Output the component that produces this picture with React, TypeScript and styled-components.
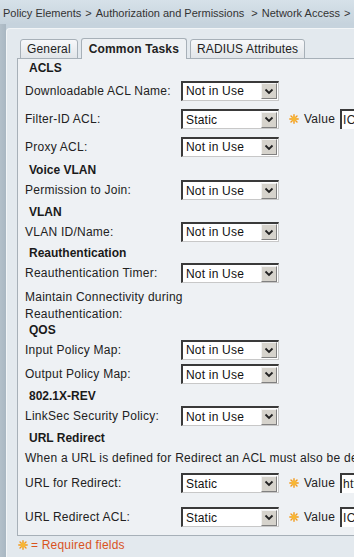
import React from "react";
import styled, { createGlobalStyle } from "styled-components";

const Global = createGlobalStyle`
  html, body { margin: 0; padding: 0; overflow: hidden; }
  body { font-family: "Liberation Sans", Arial, sans-serif; background: #e2e8ed; }
`;

const Page = styled.div`
  width: 354px;
  height: 557px;
  display: flex;
  flex-direction: column;
  overflow: hidden;
  color: #222;
`;

const Breadcrumb = styled.div`
  height: 24px;
  flex: none;
  display: flex;
  align-items: center;
  padding: 2px 0 0 3px;
  box-sizing: border-box;
  font-size: 11px;
  white-space: nowrap;
  color: #333;
  background: linear-gradient(#d6e1e9, #c6d3dd);
`;

const Crumb = styled.span<{ $link?: boolean }>`
  color: ${(p) => (p.$link ? "#2a7bd0" : "#333")};
`;

const Sep = styled.span`
  margin: 0 4px;
`;

const Body = styled.div`
  flex: 1;
  display: flex;
  background: #c6d3dd;
  min-height: 0;
`;

const LeftStrip = styled.div`
  width: 6px;
  flex: none;
  background: linear-gradient(90deg, #b3c0ca, #a9b7c2);
`;

const Outer = styled.div`
  flex: 1;
  margin-top: 4px;
  border-top: 1px solid #f2f5f7;
  border-left: 1px solid #f2f5f7;
  border-top-left-radius: 4px;
  background: #e3e9ee;
  padding: 9px 0 0 10px;
  display: flex;
  flex-direction: column;
  min-width: 0;
  overflow: hidden;
`;

const TabBar = styled.div`
  display: flex;
  align-items: flex-end;
  gap: 3px;
  padding-left: 3px;
  height: 21px;
  position: relative;
  z-index: 1;
`;

const Tab = styled.div<{ $active?: boolean }>`
  height: ${(p) => (p.$active ? 21 : 20)}px;
  box-sizing: border-box;
  padding: 0 ${(p) => (p.$active ? 7 : 6)}px;
  display: flex;
  align-items: center;
  font-size: 12px;
  letter-spacing: 0.15px;
  font-weight: ${(p) => (p.$active ? "bold" : "normal")};
  color: #222;
  border: 1px solid #a7b0b8;
  border-bottom: ${(p) => (p.$active ? "none" : "1px solid #a7b0b8")};
  border-radius: 3px 3px 0 0;
  background: ${(p) =>
    p.$active ? "#eef1f4" : "linear-gradient(#f7f8fa, #e1e5e9)"};
  white-space: nowrap;
`;

const Panel = styled.div`
  margin-top: -1px;
  border-top: 1px solid #a7b0b8;
  border-left: 1px solid #a7b0b8;
  border-bottom: 1px solid #a7b0b8;
  background: #eef1f4;
  padding: 0 0 2px 7px;
  width: 400px;
  box-sizing: border-box;
`;

const Header = styled.div<{ $h?: number }>`
  height: ${(p) => p.$h ?? 18}px;
  display: flex;
  align-items: center;
  padding-left: 4px;
  font-size: 12px;
  font-weight: bold;
  color: #1a1a1a;
`;

const Row = styled.div<{ $h: number }>`
  height: ${(p) => p.$h}px;
  box-sizing: border-box;
  padding-bottom: 2px;
  display: flex;
  align-items: center;
  font-size: 12px;
  white-space: nowrap;
`;

const Label = styled.div`
  width: 156px;
  flex: none;
  color: #222;
  letter-spacing: 0.25px;
`;

const Note = styled.div<{ $h: number }>`
  height: ${(p) => p.$h}px;
  box-sizing: border-box;
  padding-top: 4px;
  display: flex;
  align-items: center;
  font-size: 12px;
  letter-spacing: 0.25px;
  white-space: nowrap;
`;

const TwoLine = styled.div<{ $h: number }>`
  height: ${(p) => p.$h}px;
  box-sizing: border-box;
  padding-top: 3px;
  font-size: 12px;
  letter-spacing: 0.25px;
  line-height: 17px;
`;

const SelectBox = styled.div`
  width: 98px;
  height: 20px;
  box-sizing: border-box;
  display: flex;
  align-items: center;
  background: #fff;
  border-top: 2px solid #3a3a3a;
  border-left: 2px solid #3a3a3a;
  border-right: 1px solid #c8c8c8;
  border-bottom: 1px solid #c8c8c8;
  padding-left: 3px;
  font-size: 12px;
  letter-spacing: 0.2px;
  color: #111;
`;

const SelectText = styled.span`
  flex: 1;
`;

const DropButton = styled.div`
  width: 16px;
  height: 16px;
  margin-right: 1px;
  box-sizing: border-box;
  display: flex;
  align-items: center;
  justify-content: center;
  background: #d6d3cc;
  border-top: 1px solid #f2f2f2;
  border-left: 1px solid #f2f2f2;
  border-right: 1px solid #808080;
  border-bottom: 1px solid #808080;
`;

const ValueGroup = styled.div`
  display: flex;
  align-items: center;
  margin-left: 10px;
  font-size: 12px;
  letter-spacing: 0.25px;
`;

const ValueLabel = styled.span`
  margin-left: 5px;
  margin-right: 5px;
`;

const ValueInput = styled.div`
  width: 60px;
  height: 20px;
  box-sizing: border-box;
  background: #fff;
  border-top: 2px solid #3a3a3a;
  border-left: 2px solid #3a3a3a;
  padding-left: 1px;
  display: flex;
  align-items: center;
  font-size: 12px;
`;

const Footer = styled.div`
  height: 18px;
  display: flex;
  align-items: center;
  padding-left: 1px;
  font-size: 12px;
  letter-spacing: 0.2px;
  color: #d9531e;
`;

const FooterText = styled.span`
  margin-left: 3px;
`;

const Star = () => (
  <svg width="10" height="10" viewBox="0 0 10 10">
    <g stroke="#f39a1a" strokeWidth="1.4" strokeLinecap="round">
      <line x1="5" y1="0.8" x2="5" y2="9.2" />
      <line x1="0.8" y1="5" x2="9.2" y2="5" />
      <line x1="2" y1="2" x2="8" y2="8" />
      <line x1="8" y1="2" x2="2" y2="8" />
    </g>
    <circle cx="5" cy="5" r="2.4" fill="#f7b733" />
  </svg>
);

const Chevron = () => (
  <svg width="10" height="7" viewBox="0 0 10 7">
    <polyline points="1.5,1.5 5,5 8.5,1.5" fill="none" stroke="#222" strokeWidth="1.8" />
  </svg>
);

const Select = ({ value }: { value: string }) => (
  <SelectBox>
    <SelectText>{value}</SelectText>
    <DropButton>
      <Chevron />
    </DropButton>
  </SelectBox>
);

const Value = ({ text }: { text: string }) => (
  <ValueGroup>
    <Star />
    <ValueLabel>Value</ValueLabel>
    <ValueInput>{text}</ValueInput>
  </ValueGroup>
);

export default function App() {
  return (
    <Page>
      <Global />
      <Breadcrumb>
        <Crumb>Policy Elements</Crumb>
        <Sep>&gt;</Sep>
        <Crumb>Authorization and Permissions</Crumb>
        <Sep>&nbsp;&gt;</Sep>
        <Crumb>Network Access</Crumb>
        <Sep>&gt;</Sep>
        <Crumb $link>Authorization Profiles</Crumb>
      </Breadcrumb>
      <Body>
        <LeftStrip />
        <Outer>
          <TabBar>
            <Tab>General</Tab>
            <Tab $active>Common Tasks</Tab>
            <Tab>RADIUS Attributes</Tab>
          </TabBar>
          <Panel>
            <Header>ACLS</Header>
            <Row $h={29}>
              <Label>Downloadable ACL Name:</Label>
              <Select value="Not in Use" />
            </Row>
            <Row $h={28}>
              <Label>Filter-ID ACL:</Label>
              <Select value="Static" />
              <Value text="IC" />
            </Row>
            <Row $h={27}>
              <Label>Proxy ACL:</Label>
              <Select value="Not in Use" />
            </Row>
            <Header $h={18}>Voice VLAN</Header>
            <Row $h={24}>
              <Label>Permission to Join:</Label>
              <Select value="Not in Use" />
            </Row>
            <Header>VLAN</Header>
            <Row $h={23}>
              <Label>VLAN ID/Name:</Label>
              <Select value="Not in Use" />
            </Row>
            <Header>Reauthentication</Header>
            <Row $h={24}>
              <Label>Reauthentication Timer:</Label>
              <Select value="Not in Use" />
            </Row>
            <TwoLine $h={35}>
              Maintain Connectivity during
              <br />
              Reauthentication:
            </TwoLine>
            <Header $h={17}>QOS</Header>
            <Row $h={25}>
              <Label>Input Policy Map:</Label>
              <Select value="Not in Use" />
            </Row>
            <Row $h={24}>
              <Label>Output Policy Map:</Label>
              <Select value="Not in Use" />
            </Row>
            <Header>802.1X-REV</Header>
            <Row $h={24}>
              <Label>LinkSec Security Policy:</Label>
              <Select value="Not in Use" />
            </Row>
            <Header>URL Redirect</Header>
            <Note $h={18}>When a URL is defined for Redirect an ACL must also be defined</Note>
            <Row $h={38}>
              <Label>URL for Redirect:</Label>
              <Select value="Static" />
              <Value text="https" />
            </Row>
            <Row $h={30}>
              <Label>URL Redirect ACL:</Label>
              <Select value="Static" />
              <Value text="IC" />
            </Row>
          </Panel>
          <Footer>
            <Star />
            <FooterText>= Required fields</FooterText>
          </Footer>
        </Outer>
      </Body>
    </Page>
  );
}
